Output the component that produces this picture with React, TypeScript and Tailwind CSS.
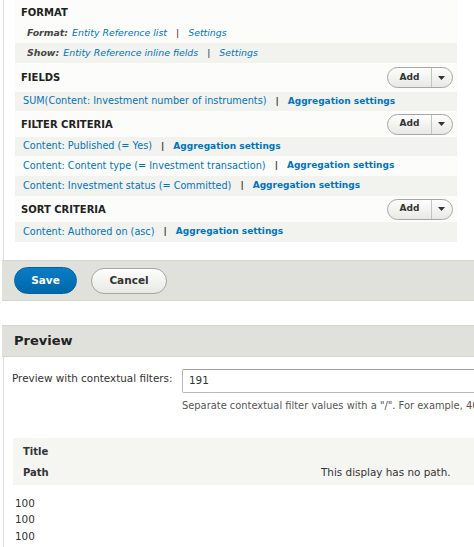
import React from "react";

const LINK = "text-[#0074bd]";

function AddButton() {
  return (
    <div className="flex h-[21px] w-[66px] items-stretch rounded-full border border-[#a6a6a6] bg-gradient-to-b from-[#fefefe] to-[#e8e8e4] text-[#333]">
      <div className="flex w-[44px] items-center justify-center border-r border-[#c4c4c0] text-[9px] font-bold">Add</div>
      <div className="flex flex-1 items-center justify-center pr-[2px]">
        <svg width="7" height="4" viewBox="0 0 7 4"><path d="M0 0h7L3.5 4z" fill="#333" /></svg>
      </div>
    </div>
  );
}

function Header({ title, add, h }: { title: string; add?: boolean; h: string }) {
  return (
    <div className={`flex ${h} items-center justify-between pl-[6px] pr-[4px]`}>
      <span className="text-[10px] font-bold text-[#222]">{title}</span>
      {add && <AddButton />}
    </div>
  );
}

function LinkRow({ label, gray, h = "h-[20px]" }: { label: string; gray?: boolean; h?: string }) {
  return (
    <div className={`flex ${h} items-center pl-[8px] text-[9.7px] ${gray ? "bg-[#f2f2ee]" : ""}`}>
      <span className={LINK}>{label}</span>
      <span className="mx-[9px] text-[#333] font-bold text-[9px]">|</span>
      <span className={`${LINK} text-[9px] font-bold`}>Aggregation settings</span>
    </div>
  );
}

export default function App() {
  return (
    <div className="h-[547px] w-[474px] overflow-hidden bg-white font-['DejaVu_Sans',sans-serif] text-[#333]">
      {/* Top panel */}
      <div className="ml-[3px] h-[260px] border-l border-[#dcdcdc] pl-[11px]">
        <div className="w-[442px] bg-[#fcfcfa]">
          <Header title="FORMAT" h="h-[24px]" />
          <div className="flex h-[19px] items-center pl-[12px] text-[9.4px] italic">
            <span className="font-bold text-[#444]">Format:</span>
            <span className={`ml-[4px] ${LINK}`}>Entity Reference list</span>
            <span className="mx-[9px] text-[#333]">|</span>
            <span className={LINK}>Settings</span>
          </div>
          <div className="flex h-[20px] items-center bg-[#f2f2ee] pl-[12px] text-[9.4px] italic">
            <span className="font-bold text-[#444]">Show:</span>
            <span className={`ml-[4px] ${LINK}`}>Entity Reference inline fields</span>
            <span className="mx-[9px] text-[#333]">|</span>
            <span className={LINK}>Settings</span>
          </div>
          <Header title="FIELDS" add h="h-[29px]" />
          <LinkRow label="SUM(Content: Investment number of instruments)" gray h="h-[19px]" />
          <Header title="FILTER CRITERIA" add h="h-[26px]" />
          <LinkRow label="Content: Published (= Yes)" gray h="h-[19px]" />
          <LinkRow label="Content: Content type (= Investment transaction)" />
          <LinkRow label="Content: Investment status (= Committed)" gray />
          <Header title="SORT CRITERIA" add h="h-[26px]" />
          <LinkRow label="Content: Authored on (asc)" gray />
        </div>
      </div>

      {/* Actions */}
      <div className="ml-[2px] flex h-[41px] items-center gap-[14px] border-y border-[#d6d6d1] bg-[#e1e1dc] pl-[12px]">
        <button className="flex h-[27px] w-[63px] items-center justify-center rounded-full border border-[#0062a0] bg-gradient-to-b from-[#0a7dc6] to-[#0067ab] text-[10.5px] font-bold text-white">
          Save
        </button>
        <button className="flex h-[26px] w-[76px] items-center justify-center rounded-full border border-[#a6a6a6] bg-gradient-to-b from-[#fefefe] to-[#e8e8e4] text-[10.5px] font-bold text-[#333]">
          Cancel
        </button>
      </div>

      {/* Preview header */}
      <div className="ml-[2px] mt-[24px] flex h-[32px] items-center border-y border-[#d6d6d1] bg-[#e1e1dc] pl-[12px]">
        <span className="text-[13px] font-bold text-[#222]">Preview</span>
      </div>

      {/* Preview body */}
      <div className="ml-[3px] h-[200px] border-l border-[#dcdcdc]">
        <div className="flex pt-[12px]">
          <div className="w-[178px] shrink-0 pl-[8px] pt-[2px] text-[10.4px] text-[#333]">Preview with contextual filters:</div>
          <div className="min-w-0 flex-1 overflow-hidden">
            <div className="flex h-[24px] w-[320px] items-center rounded-[2px] border border-[#b8b8b8] border-t-[#a0a0a0] pl-[6px] text-[10.4px] text-[#333]">
              191
            </div>
            <div className="mt-[6px] whitespace-nowrap text-[9.9px] text-[#555]">
              Separate contextual filter values with a "/". For example, 40/12/10.
            </div>
          </div>
        </div>
        <div className="ml-[9px] mt-[24px] h-[47px] bg-[#f5f5f2] pt-[3px]">
          <div className="flex h-[21px] items-center pl-[10px] text-[10px] font-bold text-[#333]">Title</div>
          <div className="flex h-[21px] items-center pl-[10px] text-[10px]">
            <span className="w-[298px] font-bold text-[#333]">Path</span>
            <span className="text-[10.4px] text-[#333]">This display has no path.</span>
          </div>
        </div>
        <div className="mt-[10px] pl-[11px] text-[10.4px] leading-[16.5px] text-[#333]">
          <div>100</div>
          <div>100</div>
          <div>100</div>
        </div>
      </div>
    </div>
  );
}
